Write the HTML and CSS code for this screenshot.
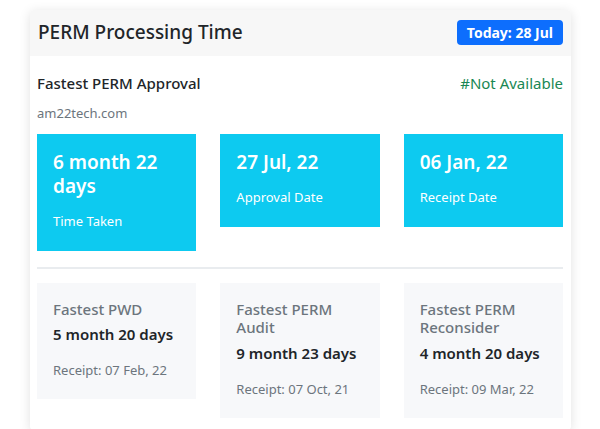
FILE: index.html
```html
<!DOCTYPE html>
<html lang="en">
<head>
<meta charset="UTF-8">
<meta name="viewport" content="width=device-width, initial-scale=1.0">
<title>PERM Processing Time</title>
<link rel="stylesheet" href="styles.css">
</head>
<body>
<div class="wrap">
    <div class="card">
        <div class="card-header">
            <h5>PERM Processing Time</h5>
            <span class="badge">Today: 28 Jul</span>
        </div>
        <div class="card-body">
            <div class="top-line">
                <h6>Fastest PERM Approval</h6>
                <span class="not-available">#Not Available</span>
            </div>
            <p class="source">am22tech.com</p>

            <div class="grid">
                <div class="info-box">
                    <h5>6 month 22 days</h5>
                    <p>Time Taken</p>
                </div>
                <div class="info-box">
                    <h5>27 Jul, 22</h5>
                    <p>Approval Date</p>
                </div>
                <div class="info-box">
                    <h5>06 Jan, 22</h5>
                    <p>Receipt Date</p>
                </div>
            </div>

            <hr>

            <div class="grid">
                <div class="stat-box">
                    <div class="stat-title">Fastest PWD</div>
                    <div class="stat-value">5 month 20 days</div>
                    <div class="stat-receipt">Receipt: 07 Feb, 22</div>
                </div>
                <div class="stat-box">
                    <div class="stat-title">Fastest PERM Audit</div>
                    <div class="stat-value">9 month 23 days</div>
                    <div class="stat-receipt">Receipt: 07 Oct, 21</div>
                </div>
                <div class="stat-box">
                    <div class="stat-title">Fastest PERM Reconsider</div>
                    <div class="stat-value">4 month 20 days</div>
                    <div class="stat-receipt">Receipt: 09 Mar, 22</div>
                </div>
            </div>
        </div>
    </div>
</div>
</body>
</html>
```

FILE: styles.css
```css
body {
    font-family: "Noto Sans", "Open Sans", sans-serif;
    margin: 0;
    padding: 0;
    background-color: #fff;
    color: #212529;
}
.wrap {
    padding: 10px 29px 0 30px;
}
.card {
    background: #fff;
    border-radius: 4px;
    box-shadow: 0 2px 12px rgba(0,0,0,0.12);
    overflow: hidden;
}
.card-header {
    display: flex;
    justify-content: space-between;
    align-items: center;
    background-color: #f7f7f7;
    padding: 0 8px;
    height: 46px;
}
.card-header h5 {
    margin: -2px 0 0;
    font-size: 19px;
    font-weight: 500;
}
.badge {
    background: #0d6efd;
    color: #fff;
    font-weight: 700;
    font-size: 14px;
    padding: 4px 10px;
    border-radius: 4px;
    line-height: 17px;
    margin-top: -2px;
}
.card-body {
    padding: 17px 8px 12px 7px;
}
.top-line {
    display: flex;
    justify-content: space-between;
    align-items: center;
}
.top-line h6 {
    margin: 0;
    font-size: 15px;
    font-weight: 500;
}
.not-available {
    color: #198754;
    font-size: 15px;
}
.source {
    margin: 11px 0 12px;
    font-size: 13px;
    color: #6c757d;
}
.grid {
    display: grid;
    grid-template-columns: repeat(3, 1fr);
    gap: 24px;
    align-items: start;
}
.info-box {
    background: #0dcaf0;
    color: #fff;
    padding: 17px 16px 21px;
}
.info-box h5 {
    margin: 0 0 13px;
    font-size: 19px;
    font-weight: 600;
    line-height: 1.25;
}
.info-box p {
    margin: 0;
    font-size: 13px;
}
hr {
    border: 0;
    border-top: 2px solid #e9ecef;
    margin: 16px 0 14px;
}
.stat-box {
    background: #f7f8fa;
    padding: 17px 16px 20px;
}
.stat-title {
    color: #6c757d;
    font-size: 15px;
    font-weight: 500;
    line-height: 1.25;
}
.stat-value {
    font-size: 15px;
    font-weight: 600;
    margin: 6px 0 17px;
}
.stat-receipt {
    color: #6c757d;
    font-size: 13px;
}
```
